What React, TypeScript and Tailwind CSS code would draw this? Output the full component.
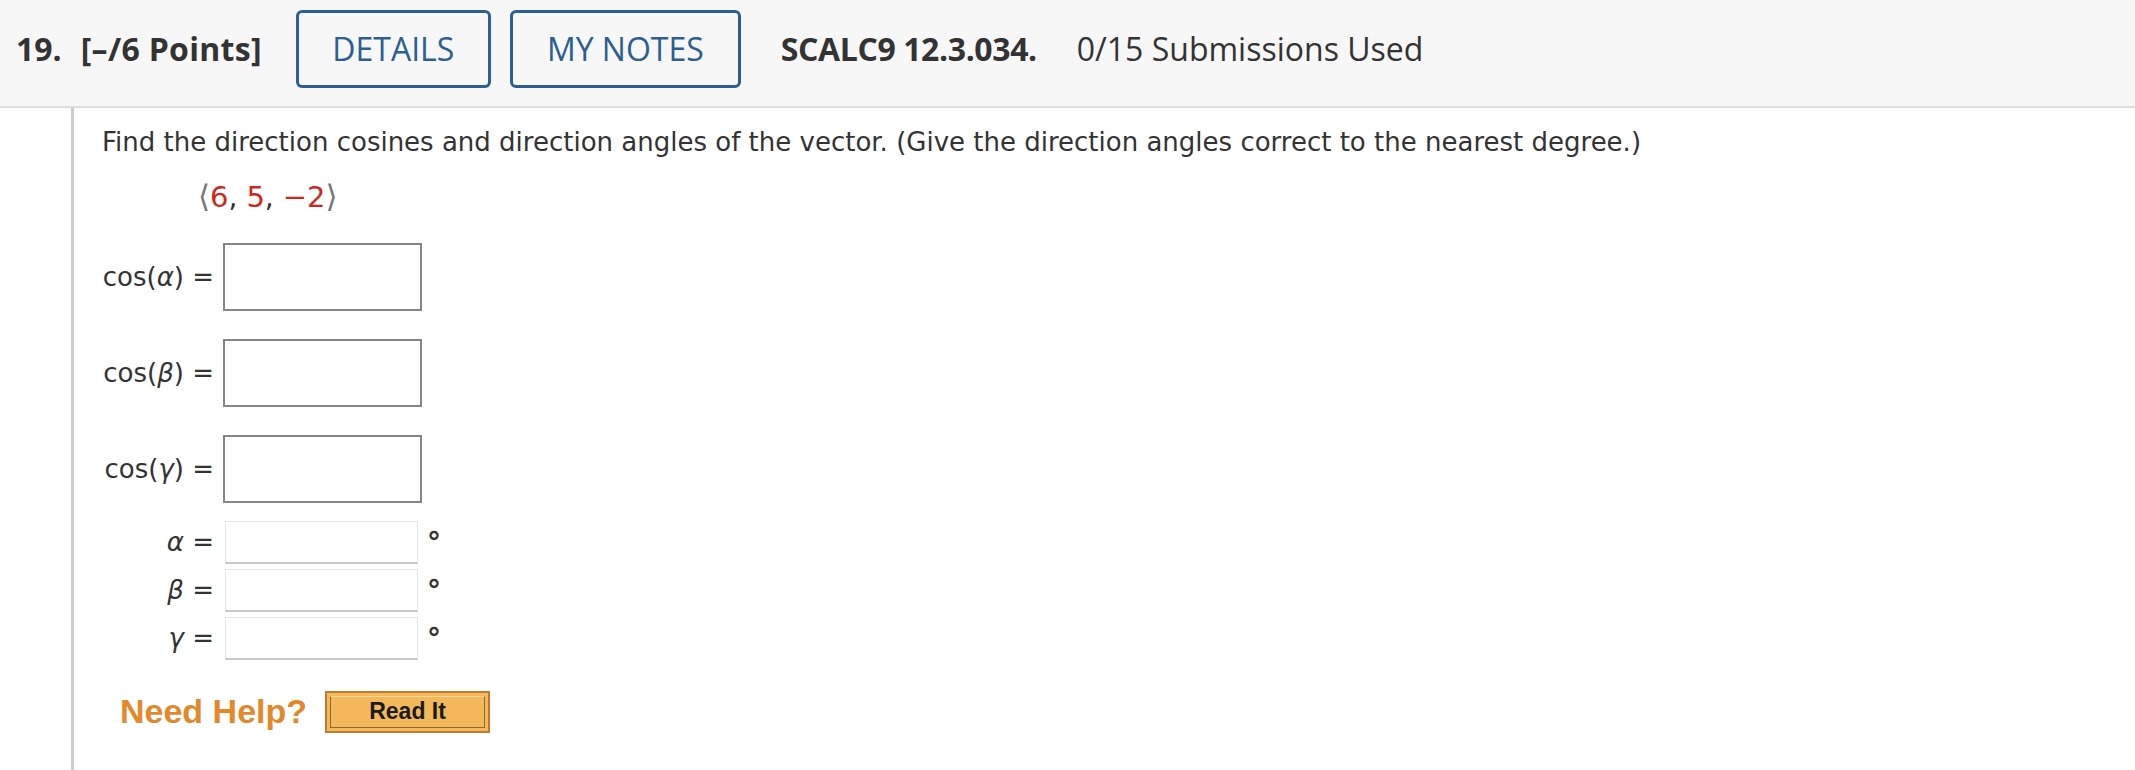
import React from "react";

const hdr = { fontFamily: '"Open Sans", "Liberation Sans", sans-serif' };
const body = { fontFamily: '"DejaVu Sans", Verdana, sans-serif' };
const arial = { fontFamily: '"Liberation Sans", Arial, sans-serif' };

function CosRow({ g }: { g: string }) {
  return (
    <div className="flex items-center">
      <div className="w-[112px] text-right whitespace-nowrap text-[26px] text-[#333333]" style={body}>
        cos(<span className="italic">{g}</span>) =
      </div>
      <div className="ml-[9px] w-[199px] h-[68px] border-2 border-[#858585] bg-white" />
    </div>
  );
}

function AngleRow({ g }: { g: string }) {
  return (
    <div className="flex items-center">
      <div className="w-[112px] text-right whitespace-nowrap text-[26px] text-[#333333]" style={body}>
        <span className="italic">{g}</span> =
      </div>
      <div className="ml-[11px] w-[193px] h-[43px] border border-[#e4e4e4] border-b-2 border-b-[#c8c8c8] bg-white" />
      <div className="ml-[9px] self-start mt-[8px] text-[28px] leading-none text-[#333333] font-bold" style={body}>
        °
      </div>
    </div>
  );
}

export default function App() {
  return (
    <div className="w-[2135px] h-[770px] bg-white overflow-hidden">
      <div
        className="h-[108px] bg-[#f7f7f7] border-b-2 border-[#dedede] flex items-center pl-[16px] pb-[8px] text-[32px] text-[#333333]"
        style={hdr}
      >
        <span className="font-bold">19.</span>
        <span className="font-bold ml-[19px] tracking-[0.3px]">[–/6 Points]</span>
        <button className="ml-[34px] h-[78px] w-[195px] border-[3px] border-[#2c5f92] rounded-[6px] text-[#2c5f92] bg-[#f7f7f7] flex items-center justify-center font-medium">
          DETAILS
        </button>
        <button className="ml-[19px] h-[78px] w-[231px] border-[3px] border-[#2c5f92] rounded-[6px] text-[#2c5f92] bg-[#f7f7f7] flex items-center justify-center font-medium">
          MY NOTES
        </button>
        <span className="font-bold ml-[40px] tracking-[-0.4px]">SCALC9 12.3.034.</span>
        <span className="ml-[40px]">0/15 Submissions Used</span>
      </div>
      <div className="flex h-[662px]">
        <div className="ml-[71px] w-[3px] h-full bg-[#cccccc]" />
        <div className="pl-[28px] pt-[14px] flex flex-col">
          <p className="text-[26px] leading-[40px] text-[#333333] whitespace-nowrap" style={body}>
            Find the direction cosines and direction angles of the vector. (Give the direction angles correct to the nearest degree.)
          </p>
          <div className="mt-[14px] ml-[96px] text-[28px] leading-[40px] whitespace-nowrap" style={body}>
            <span className="text-[#777777] text-[31px]">⟨</span>
            <span className="text-[#d0261d] text-[29px]">6</span>
            <span className="text-[#333333]">, </span>
            <span className="text-[#d0261d] text-[29px]">5</span>
            <span className="text-[#333333]">, </span>
            <span className="text-[#d0261d] text-[29px]">−2</span>
            <span className="text-[#777777] text-[31px]">⟩</span>
          </div>
          <div className="mt-[25px] flex flex-col gap-[28px]">
            <CosRow g="α" />
            <CosRow g="β" />
            <CosRow g="γ" />
          </div>
          <div className="mt-[18px] flex flex-col gap-[5px]">
            <AngleRow g="α" />
            <AngleRow g="β" />
            <AngleRow g="γ" />
          </div>
          <div className="mt-[26px] flex items-center">
            <span className="ml-[18px] text-[34px] font-bold text-[#e3892c]" style={arial}>
              Need Help?
            </span>
            <button
              className="ml-[18px] w-[165px] h-[42px] bg-[#f3b85a] border-2 border-[#c47a2e] p-[3px] flex"
              style={arial}
            >
              <span className="flex-1 border border-[#8f6a2e] border-t-[#f8d89a] flex items-center justify-center text-[23px] font-bold text-[#1a1a1a]">
                Read It
              </span>
            </button>
          </div>
        </div>
      </div>
    </div>
  );
}
